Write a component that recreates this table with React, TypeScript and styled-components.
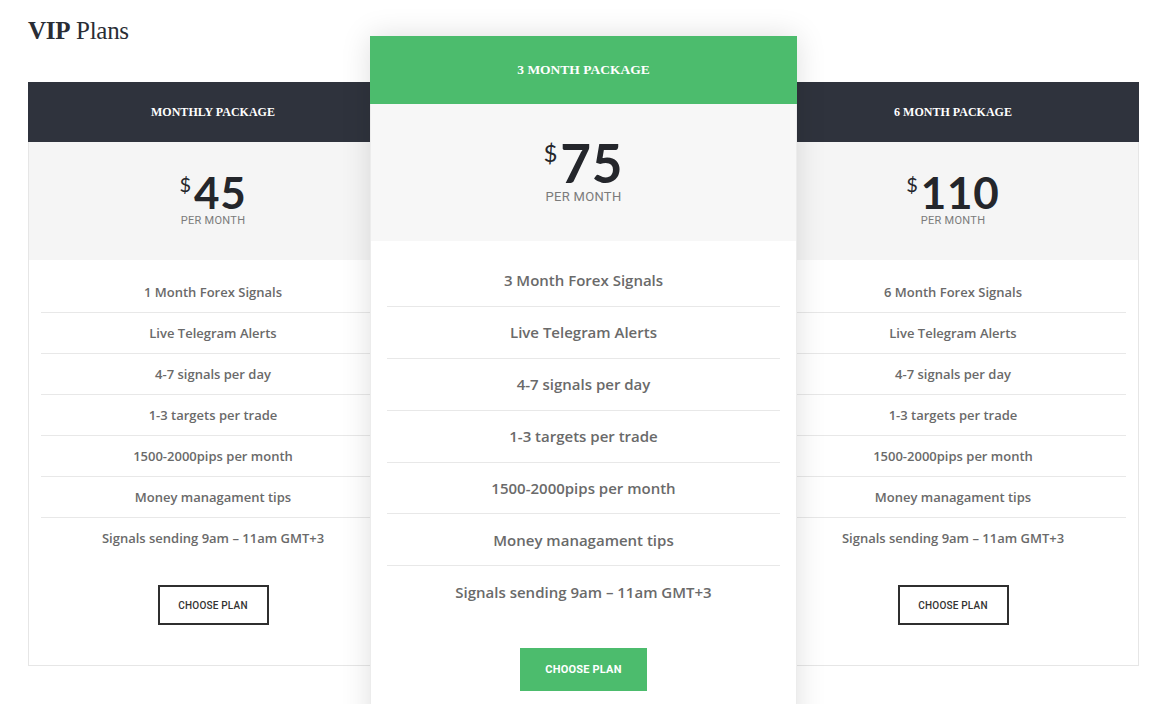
import React from "react";
import styled, { createGlobalStyle } from "styled-components";

const GlobalStyle = createGlobalStyle`
  html, body {
    margin: 0;
    padding: 0;
    background: #ffffff;
  }
  body {
    font-family: "Open Sans", "Liberation Sans", sans-serif;
    overflow: hidden;
  }
`;

const Page = styled.div`
  width: 1162px;
  height: 704px;
  padding-top: 24px;
  box-sizing: border-box;
  overflow: hidden;
`;

const Title = styled.h2`
  margin: 0 0 -2px 28px;
  font-family: "Liberation Serif", "DejaVu Serif", serif;
  font-size: 25px;
  font-weight: 400;
  line-height: 14px;
  color: #2a2d35;
  letter-spacing: -0.3px;

  b {
    font-weight: 700;
  }
`;

const Row = styled.div`
  display: flex;
  align-items: flex-start;
  padding: 0 23px 0 28px;
`;

const Card = styled.div<{ $featured?: boolean; $width: number }>`
  position: relative;
  box-sizing: border-box;
  width: ${(p) => p.$width}px;
  flex: none;
  background: #ffffff;
  border: 1px solid ${(p) => (p.$featured ? "#ececec" : "#e6e6e6")};
  border-top: none;
  margin-top: ${(p) => (p.$featured ? 0 : 46)}px;
  margin-left: ${(p) => (p.$featured ? -28 : 0)}px;
  margin-right: ${(p) => (p.$featured ? -30 : 0)}px;
  z-index: ${(p) => (p.$featured ? 2 : 1)};
  box-shadow: ${(p) => (p.$featured ? "0 0 28px rgba(0, 0, 0, 0.13)" : "none")};
  padding-bottom: 40px;
  text-align: center;
`;

const Header = styled.div<{ $featured?: boolean }>`
  height: ${(p) => (p.$featured ? 68 : 60)}px;
  margin: 0 -1px;
  display: flex;
  align-items: center;
  justify-content: center;
  background: ${(p) => (p.$featured ? "#4cbc6d" : "#2f333d")};
  color: #ffffff;
  font-family: "Liberation Serif", "DejaVu Serif", serif;
  font-weight: 700;
  font-size: ${(p) => (p.$featured ? 13.5 : 12)}px;
  text-transform: uppercase;
`;

const PriceBox = styled.div<{ $featured?: boolean }>`
  height: ${(p) => (p.$featured ? 137 : 118)}px;
  background: ${(p) => (p.$featured ? "#f7f7f7" : "#f5f5f5")};
  display: flex;
  flex-direction: column;
  align-items: center;
  padding-top: ${(p) => (p.$featured ? 38 : 33)}px;
  box-sizing: border-box;
`;

const Amount = styled.div<{ $featured?: boolean }>`
  display: flex;
  align-items: flex-start;
  font-family: "Lato", "Roboto", sans-serif;
  font-weight: 700;
  color: #24262b;
  font-size: ${(p) => (p.$featured ? 53 : 44)}px;
  line-height: 0.8;
  letter-spacing: 0.8px;
`;

const Currency = styled.span<{ $featured?: boolean }>`
  font-size: ${(p) => (p.$featured ? 24 : 20)}px;
  font-weight: 400;
  line-height: 1;
  margin-top: -1px;
  margin-right: 2px;
`;

const Period = styled.div<{ $featured?: boolean }>`
  font-family: "Roboto", "Liberation Sans", sans-serif;
  font-weight: 400;
  font-size: ${(p) => (p.$featured ? 13 : 11)}px;
  line-height: ${(p) => (p.$featured ? 15 : 13)}px;
  margin-top: ${(p) => (p.$featured ? 5 : 4)}px;
  color: #7b7b7b;
  letter-spacing: 0.3px;
  text-transform: uppercase;
`;

const Features = styled.ul<{ $featured?: boolean }>`
  list-style: none;
  margin: 0;
  padding: ${(p) => (p.$featured ? "14px 16px 0" : "12px 12px 0")};
`;

const Feature = styled.li<{ $featured?: boolean }>`
  height: ${(p) => (p.$featured ? 50.9 : 40)}px;
  display: flex;
  align-items: center;
  justify-content: center;
  border-bottom: 1px solid #e8e8e8;
  font-family: "Open Sans", "Liberation Sans", sans-serif;
  font-weight: 600;
  font-size: ${(p) => (p.$featured ? 15 : 13)}px;
  color: #6a6a6a;

  &:last-child {
    border-bottom: none;
  }
`;

const PlanButton = styled.button<{ $featured?: boolean }>`
  display: inline-flex;
  align-items: center;
  justify-content: center;
  box-sizing: border-box;
  margin-top: ${(p) => (p.$featured ? 31 : 27)}px;
  width: ${(p) => (p.$featured ? 127 : 111)}px;
  height: ${(p) => (p.$featured ? 43 : 40)}px;
  font-family: "Roboto", "Liberation Sans", sans-serif;
  font-size: ${(p) => (p.$featured ? 11 : 10)}px;
  font-weight: ${(p) => (p.$featured ? 700 : 500)};
  letter-spacing: 0.2px;
  text-transform: uppercase;
  cursor: pointer;
  color: ${(p) => (p.$featured ? "#ffffff" : "#333333")};
  background: ${(p) => (p.$featured ? "#4cbc6d" : "#ffffff")};
  border: ${(p) => (p.$featured ? "none" : "2px solid #2f2f2f")};
`;

const features = (first: string) => [
  first,
  "Live Telegram Alerts",
  "4-7 signals per day",
  "1-3 targets per trade",
  "1500-2000pips per month",
  "Money managament tips",
  "Signals sending 9am \u2013 11am GMT+3",
];

const plans = [
  { name: "Monthly Package", price: "45", width: 370, list: features("1 Month Forex Signals") },
  { name: "3 Month Package", price: "75", width: 427, featured: true, list: features("3 Month Forex Signals") },
  { name: "6 Month Package", price: "110", width: 372, list: features("6 Month Forex Signals") },
];

export default function App() {
  return (
    <Page>
      <GlobalStyle />
      <Title>
        <b>VIP</b> Plans
      </Title>
      <Row>
        {plans.map((plan) => (
          <Card key={plan.name} $featured={plan.featured} $width={plan.width}>
            <Header $featured={plan.featured}>{plan.name}</Header>
            <PriceBox $featured={plan.featured}>
              <Amount $featured={plan.featured}>
                <Currency $featured={plan.featured}>$</Currency>
                {plan.price}
              </Amount>
              <Period $featured={plan.featured}>Per Month</Period>
            </PriceBox>
            <Features $featured={plan.featured}>
              {plan.list.map((item) => (
                <Feature key={item} $featured={plan.featured}>
                  {item}
                </Feature>
              ))}
            </Features>
            <PlanButton $featured={plan.featured}>Choose Plan</PlanButton>
          </Card>
        ))}
      </Row>
    </Page>
  );
}
